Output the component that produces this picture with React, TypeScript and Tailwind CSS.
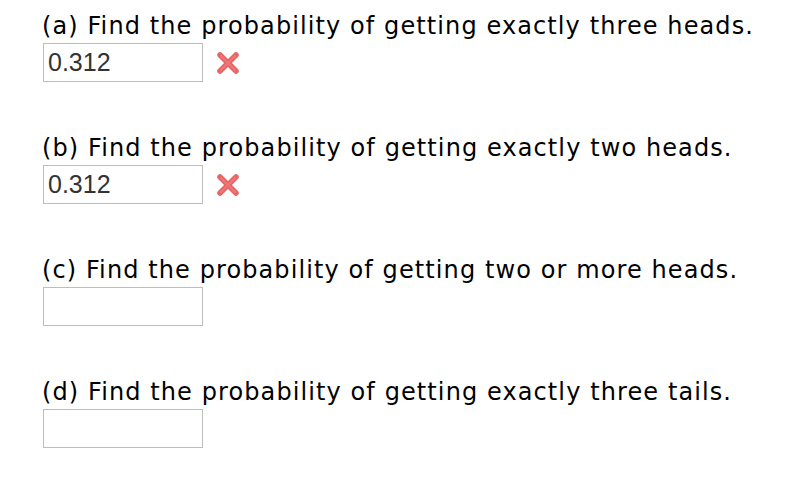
import React from 'react';

const questions = [
  { label: '(a) Find the probability of getting exactly three heads.', value: '0.312', wrong: true },
  { label: '(b) Find the probability of getting exactly two heads.', value: '0.312', wrong: true },
  { label: '(c) Find the probability of getting two or more heads.', value: '', wrong: false },
  { label: '(d) Find the probability of getting exactly three tails.', value: '', wrong: false },
];

const WrongMark = () => (
  <svg width="26" height="26" viewBox="0 0 26 26" className="ml-[12px]">
    <g stroke="#e55a5a" strokeWidth="5.5" strokeLinecap="round" opacity="0.92">
      <line x1="5" y1="5" x2="21" y2="21" />
      <line x1="21" y1="5" x2="5" y2="21" />
    </g>
    <g stroke="#f08484" strokeWidth="2" strokeLinecap="round" opacity="0.6">
      <line x1="6" y1="6" x2="20" y2="20" />
      <line x1="20" y1="6" x2="6" y2="20" />
    </g>
  </svg>
);

export default function App() {
  return (
    <div className="w-[800px] h-[486px] bg-white pl-[42px] pt-[11px]">
      {questions.map((q) => (
        <div key={q.label} className="h-[122px] flex flex-col">
          <p className="h-[30px] text-[24px] leading-[30px] tracking-[1.1px] text-black font-['DejaVu_Sans',Verdana,sans-serif] whitespace-nowrap">
            {q.label}
          </p>
          <div className="flex items-center mt-[2px]">
            <input
              readOnly
              defaultValue={q.value}
              className="ml-[1px] w-[160px] h-[39px] border border-[#bdbdbd] bg-white pl-[4px] text-[25px] text-[#333] font-['Liberation_Sans',Arial,sans-serif] outline-none"
            />
            {q.wrong && <WrongMark />}
          </div>
        </div>
      ))}
    </div>
  );
}
